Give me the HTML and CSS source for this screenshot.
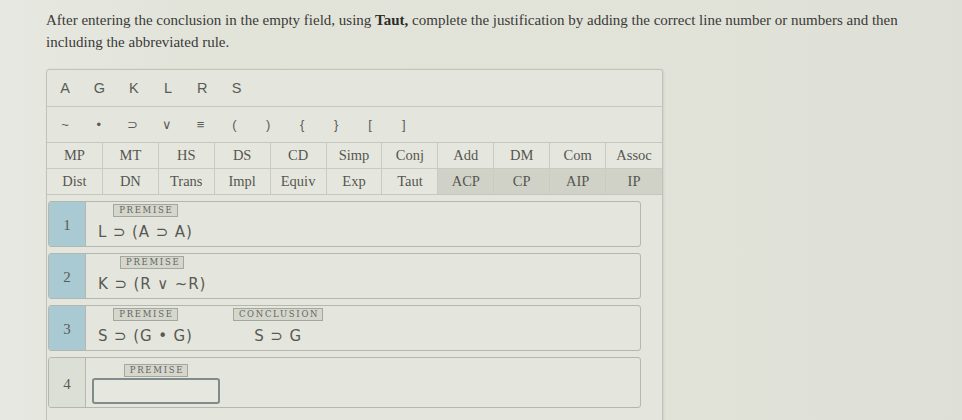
FILE: index.html
```html
<!DOCTYPE html>
<html>
<head>
<meta charset="utf-8">
<link rel="stylesheet" href="styles.css">
</head>
<body>
<div class="page">
  <p class="question">After entering the conclusion in the empty field, using <b>Taut,</b> complete the justification by adding the correct line number or numbers and then including the abbreviated rule.</p>
  <div class="panel">
    <div class="toolbar letters">
      <span class="key">A</span><span class="key">G</span><span class="key">K</span><span class="key">L</span><span class="key">R</span><span class="key">S</span>
    </div>
    <div class="toolbar symbols">
      <span class="key">~</span><span class="key">•</span><span class="key">⊃</span><span class="key">∨</span><span class="key">≡</span><span class="key">(</span><span class="key">)</span><span class="key">{</span><span class="key">}</span><span class="key">[</span><span class="key">]</span>
    </div>
    <div class="rules">
      <span class="rule">MP</span><span class="rule">MT</span><span class="rule">HS</span><span class="rule">DS</span><span class="rule">CD</span><span class="rule">Simp</span><span class="rule">Conj</span><span class="rule">Add</span><span class="rule">DM</span><span class="rule">Com</span><span class="rule">Assoc</span>
      <span class="rule">Dist</span><span class="rule">DN</span><span class="rule">Trans</span><span class="rule">Impl</span><span class="rule">Equiv</span><span class="rule">Exp</span><span class="rule">Taut</span><span class="rule shaded">ACP</span><span class="rule shaded">CP</span><span class="rule shaded">AIP</span><span class="rule shaded">IP</span>
    </div>
    <div class="proof">
      <div class="line">
        <div class="num done">1</div>
        <div class="content">
          <div class="col"><span class="label">PREMISE</span><span class="formula">L ⊃ (A ⊃ A)</span></div>
        </div>
      </div>
      <div class="line">
        <div class="num done">2</div>
        <div class="content">
          <div class="col"><span class="label">PREMISE</span><span class="formula">K ⊃ (R ∨ ~R)</span></div>
        </div>
      </div>
      <div class="line">
        <div class="num done">3</div>
        <div class="content">
          <div class="col"><span class="label">PREMISE</span><span class="formula">S ⊃ (G • G)</span></div>
          <div class="col"><span class="label">CONCLUSION</span><span class="formula">S ⊃ G</span></div>
        </div>
      </div>
      <div class="line last">
        <div class="num">4</div>
        <div class="content tight">
          <div class="col input-col"><span class="label">PREMISE</span><span class="field"></span></div>
        </div>
      </div>
    </div>
  </div>
</div>
</body>
</html>
```

FILE: styles.css
```css
html, body {
  margin: 0;
  padding: 0;
}
body {
  width: 962px;
  height: 420px;
  overflow: hidden;
  background: linear-gradient(90deg, #e7e8e1 0%, #e2e4da 20%, #e1e3d9 70%, #dedfd6 100%);
}
.page {
  padding: 9px 0 0 46px;
}
.question {
  margin: 0;
  width: 880px;
  font-family: "Liberation Serif", serif;
  font-size: 15px;
  line-height: 22px;
  color: #3a3a38;
}
.question b {
  color: #2c2c2a;
}
.panel {
  margin-top: 16px;
  width: 615px;
  height: 360px;
  border: 1px solid #c1c3b9;
  border-radius: 3px;
  background: #e4e6dd;
  box-shadow: 1px 0 2px rgba(0,0,0,0.08);
}
.toolbar {
  display: flex;
  align-items: center;
  padding-left: 1px;
  border-bottom: 1px solid #c6c8be;
}
.letters {
  height: 36px;
}
.symbols {
  height: 35px;
}
.key {
  width: 34.3px;
  text-align: center;
  font-family: "Liberation Sans", sans-serif;
  color: #5a5b57;
}
.letters .key {
  font-size: 14.5px;
}
.symbols .key {
  font-size: 13px;
  width: 33.9px;
}
.rules {
  display: grid;
  grid-template-columns: repeat(11, 1fr);
  grid-template-rows: 26px 25px;
  border-bottom: 1px solid #c6c8be;
}
.rule {
  display: flex;
  align-items: center;
  justify-content: center;
  font-family: "Liberation Serif", serif;
  font-size: 14.5px;
  color: #555651;
  border-right: 1px solid #c9cbc1;
  border-bottom: 1px solid #c9cbc1;
  background: #e5e7de;
}
.rule:nth-child(11n) {
  border-right: none;
}
.rule:nth-child(n+12) {
  border-bottom: none;
}
.rule.shaded {
  background: #d0d2c7;
}
.proof {
  display: flex;
  flex-direction: column;
  gap: 6px;
  padding: 6px 21px 0 1px;
}
.line {
  display: flex;
  height: 44px;
  border: 1px solid #b4b7ad;
  border-radius: 3px;
  background: #e4e6dd;
  overflow: hidden;
}
.line.last {
  height: 49px;
}
.num {
  flex: 0 0 36px;
  display: flex;
  align-items: center;
  justify-content: center;
  border-right: 1px solid #b4b7ad;
  background: #dcdfd5;
  font-family: "Liberation Serif", serif;
  font-size: 15px;
  padding-top: 3px;
  color: #5a5b57;
}
.num.done {
  background: #a9cad3;
}
.content {
  display: flex;
  gap: 40px;
  padding: 2px 0 0 12px;
}
.content.tight {
  padding-left: 6px;
}
.col {
  display: flex;
  flex-direction: column;
  align-items: center;
  gap: 6px;
}
.input-col {
  gap: 1px;
  padding-top: 4px;
}
.label {
  font-family: "DejaVu Serif", serif;
  font-size: 8.5px;
  line-height: 11px;
  letter-spacing: 1.7px;
  padding: 0 3px 0 5px;
  border: 1px solid #a4a79d;
  background: #d5d7cd;
  color: #64655f;
}
.formula {
  font-family: "DejaVu Sans", sans-serif;
  font-size: 15px;
  line-height: 18px;
  letter-spacing: 0.9px;
  color: #585955;
}
.field {
  width: 124px;
  height: 22px;
  border: 2px solid #7f8c8b;
  border-radius: 3px;
  background: #e6e8df;
}
```
